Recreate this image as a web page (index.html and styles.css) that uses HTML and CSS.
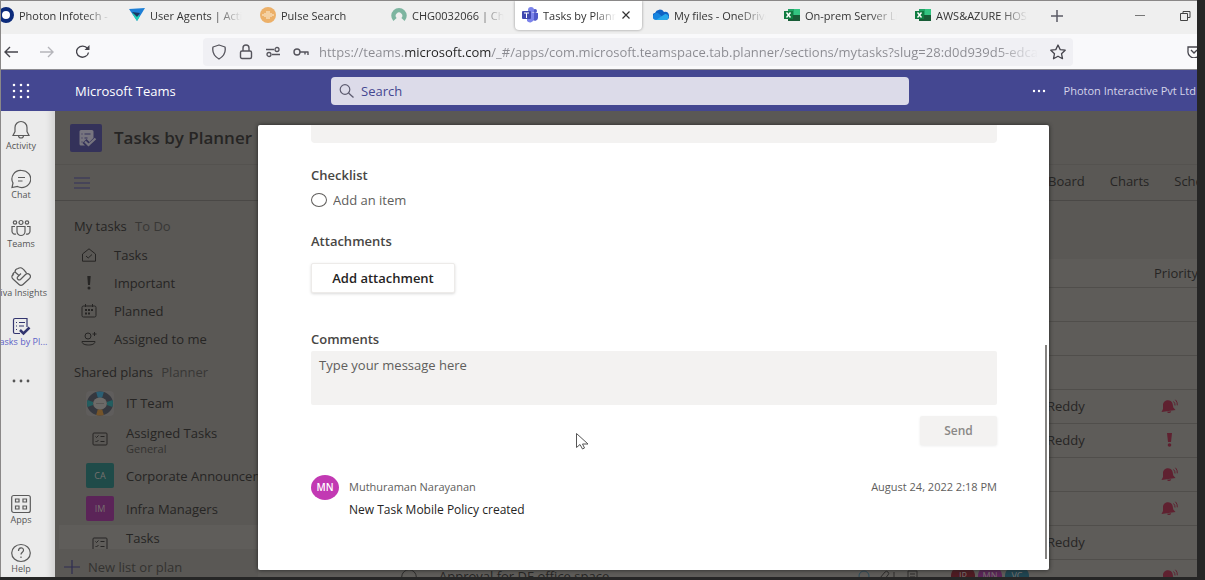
FILE: index.html
```html
<!DOCTYPE html>
<html lang="en">
<head>
    <meta charset="UTF-8">
    <meta name="viewport" content="width=device-width, initial-scale=1.0">
    <title>Tasks by Planner</title>
    <link rel="stylesheet" href="styles.css">
</head>
<body>
    <div class="window">
        <div class="tabs">
            <button class="tab first" type="button">
                <svg width="13" height="16" viewBox="3 0 13 16"><circle cx="8" cy="8" r="6" fill="#fff" stroke="#0b2a7a" stroke-width="4"/></svg>
                <span>Photon Infotech - Home</span>
            </button>
            <button class="tab" type="button">
                <svg width="16" height="16" viewBox="0 0 16 16"><path d="M0 2L16 1 8 14z" fill="#1d7fd6"/><path d="M3 6l5 8 3-5z" fill="#1fd0b4"/><path d="M3 5l8 1-3 4z" fill="#173a63"/></svg>
                <span>User Agents | Activity</span>
            </button>
            <button class="tab" type="button">
                <svg width="16" height="16" viewBox="0 0 16 16"><circle cx="8" cy="8" r="8" fill="#ecb069"/><path d="M3 7v2M5 6v4M7 4v8M9 4v8M11 6v4M13 7v2" stroke="#fdf0dc"/></svg>
                <span>Pulse Search</span>
            </button>
            <button class="tab" type="button">
                <svg width="16" height="16" viewBox="0 0 16 16"><path d="M4 12.500a5.500 5.500 0 1 1 8 0" fill="none" stroke="#7db5a0" stroke-width="4.500"/></svg>
                <span>CHG0032066 | Change</span>
            </button>
            <button class="tab active" type="button">
                <svg width="16" height="16" viewBox="0 0 16 16"><circle cx="13" cy="4" r="2" fill="#5059c9"/><circle cx="9" cy="3" r="3" fill="#7b83eb"/><path d="M11 6h5v5a3 3 0 0 1-5 2z" fill="#5059c9"/><path d="M5 6h7v6a4 4 0 0 1-7 2z" fill="#7b83eb"/><rect y="4" width="9" height="8" rx="1" fill="#4048b0"/><path d="M2 6h5M4.500 6v5" stroke="#fff"/></svg>
                <span>Tasks by Planner</span>
                <svg class="close" width="10" height="10" viewBox="0 0 10 10"><path d="M1.500 1.500l7 7M8.500 1.500l-7 7" stroke="#333" stroke-width="1.200"/></svg>
            </button>
            <button class="tab" type="button">
                <svg width="16" height="16" viewBox="0 0 16 16"><path d="M3 12a3 3 0 0 1-1-6 5 5 0 0 1 9-1 4 4 0 0 1 2 8z" fill="#0f62c4"/><path d="M0 10a4 4 0 0 1 5-4l8 7H3a3 3 0 0 1-3-3z" fill="#1684df"/><path d="M3 13l9-6a3 3 0 0 1 1 6z" fill="#28a8ea"/></svg>
                <span>My files - OneDrive</span>
            </button>
            <button class="tab" type="button">
                <svg width="16" height="16" viewBox="0 0 16 16"><path d="M4 2h12v12H4z" fill="#21a366"/><path d="M10 2h6v6h-6z" fill="#33c481"/><path d="M4 8h12v6H4z" fill="#185c37"/><rect y="4" width="9" height="8" fill="#107c41"/><path d="M2.500 5.500l4 5M6.500 5.500l-4 5" stroke="#fff" stroke-width="1.400"/></svg>
                <span>On-prem Server List</span>
            </button>
            <button class="tab" type="button">
                <svg width="16" height="16" viewBox="0 0 16 16"><path d="M4 2h12v12H4z" fill="#21a366"/><path d="M10 2h6v6h-6z" fill="#33c481"/><path d="M4 8h12v6H4z" fill="#185c37"/><rect y="4" width="9" height="8" fill="#107c41"/><path d="M2.500 5.500l4 5M6.500 5.500l-4 5" stroke="#fff" stroke-width="1.400"/></svg>
                <span>AWS&amp;AZURE HOSTS</span>
            </button>
            <button class="icon-btn" type="button" aria-label="New tab">
                <svg width="12" height="12" viewBox="0 0 12 12"><path d="M6 0v12M0 6h12" stroke="#5b5b66" stroke-width="1.500"/></svg>
            </button>
            <div class="window-controls">
                <button class="icon-btn" type="button" aria-label="Minimize">
                    <svg width="10" height="10" viewBox="0 0 10 10"><path d="M0 4.500h10" stroke="#777"/></svg>
                </button>
                <button class="icon-btn" type="button" aria-label="Restore">
                    <svg width="11" height="10" viewBox="0 0 11 10"><path d="M.500 2.500h7v7h-7zM3 2V.500h7v6H8" fill="none" stroke="#444"/></svg>
                </button>
            </div>
        </div>

        <div class="navbar">
            <button class="icon-btn" type="button" aria-label="Back">
                <svg width="14" height="12" viewBox="0 0 14 12"><path d="M14 6H1M6 1L1 6l5 5" fill="none" stroke="#45444c" stroke-width="1.400"/></svg>
            </button>
            <button class="icon-btn" type="button" aria-label="Forward">
                <svg width="14" height="12" viewBox="0 0 14 12"><path d="M0 6h13M8 1l5 5-5 5" fill="none" stroke="#b5b5ba" stroke-width="1.400"/></svg>
            </button>
            <button class="icon-btn" type="button" aria-label="Reload">
                <svg width="16" height="14" viewBox="0 0 16 14"><path d="M11.500 3.500a6 5.500 0 1 0 1 4" fill="none" stroke="#45444c" stroke-width="1.400"/><path d="M13.500 0v5H8.500z" fill="#45444c"/></svg>
            </button>
            <div class="urlbar">
                <svg width="16" height="16" viewBox="0 0 16 16"><path d="M8 1l6 2c1 5-1 9-6 12-5-3-7-7-6-12z" fill="none" stroke="#55545c" stroke-width="1.300" stroke-linejoin="round"/></svg>
                <svg width="14" height="16" viewBox="0 0 14 16"><rect x="1.500" y="7" width="11" height="7.500" rx="1.500" fill="none" stroke="#55545c" stroke-width="1.400"/><path d="M4 7V4a3 3 0 0 1 6 0v3" fill="none" stroke="#55545c" stroke-width="1.400"/></svg>
                <svg width="16" height="12" viewBox="0 0 16 12"><path d="M1 3.500h8M7 8.500h8" stroke="#55545c" stroke-width="1.400"/><circle cx="12" cy="3.500" r="2" fill="none" stroke="#55545c" stroke-width="1.300"/><circle cx="4" cy="8.500" r="2" fill="none" stroke="#55545c" stroke-width="1.300"/></svg>
                <svg width="16" height="12" viewBox="0 0 16 12"><circle cx="4" cy="6" r="3" fill="none" stroke="#55545c" stroke-width="1.400"/><path d="M7 6h8.500M12 6v2.500M15 6v3" stroke="#55545c" stroke-width="1.400"/></svg>
                <input class="url" type="text" aria-label="Address" value="https://teams.microsoft.com/_#/apps/com.microsoft.teamspace.tab.planner/sections/mytasks?slug=28:d0d939d5-edca-4">
                <svg width="16" height="16" viewBox="0 0 16 16"><path d="M8 1l2.200 4.600 5 .600-3.700 3.500 1 5L8 12.200l-4.500 2.500 1-5L.800 6.200l5-.600z" fill="none" stroke="#45444c" stroke-width="1.300" stroke-linejoin="round"/></svg>
            </div>
            <button class="icon-btn" type="button" aria-label="Save to Pocket">
                <svg width="10" height="12" viewBox="0 0 10 12"><path d="M12 1H1v4a6 6 0 0 0 9 6M4 4l3 3 3-3" fill="none" stroke="#45444c" stroke-width="1.300"/></svg>
            </button>
        </div>

        <header class="teams-header">
            <button class="icon-btn" type="button" aria-label="App launcher">
                <svg width="18" height="16" viewBox="0 0 18 16"><path d="M2 2h.010M9 2h.010M16 2h.010M2 8h.010M9 8h.010M16 8h.010M2 14h.010M9 14h.010M16 14h.010" stroke="#fff" stroke-width="2.600" stroke-linecap="round"/></svg>
            </button>
            <span class="brand">Microsoft Teams</span>
            <label class="search">
                <svg width="16" height="14" viewBox="0 0 16 14"><circle cx="6" cy="5.500" r="4.800" fill="none" stroke="#5d5c70" stroke-width="1.200"/><path d="M9.500 9l5 4.500" stroke="#5d5c70" stroke-width="1.300"/></svg>
                <input type="text" placeholder="Search" aria-label="Search">
            </label>
            <div class="account">
                <button class="icon-btn" type="button" aria-label="Settings and more">
                    <svg width="14" height="4" viewBox="0 0 14 4"><path d="M2 2h.010M7 2h.010M12 2h.010" stroke="#fff" stroke-width="2.400" stroke-linecap="round"/></svg>
                </button>
                <span>Photon Interactive Pvt Ltd</span>
            </div>
        </header>

        <div class="main">
            <nav class="rail">
                <a class="rail-item" href="#">
                    <svg width="20" height="20" viewBox="0 0 20 20"><path d="M10 1.500a6 6 0 0 0-6 6v4L2 15.500h16l-2-4v-4a6 6 0 0 0-6-6zM7.500 15.500a2.500 2.500 0 0 0 5 0"/></svg>
                    <span>Activity</span>
                </a>
                <a class="rail-item" href="#">
                    <svg width="20" height="20" viewBox="0 0 20 20"><path d="M10.500 1.500a9 8.500 0 1 1-4 16L1 18.500l1-4.500a8.700 8.500 0 0 1 8.500-12.500zM7 8.500h7M7 12h4.500"/></svg>
                    <span>Chat</span>
                </a>
                <a class="rail-item" href="#">
                    <svg width="20" height="20" viewBox="0 0 20 20"><circle cx="10" cy="4.500" r="2"/><circle cx="4" cy="4.500" r="1.700"/><circle cx="16" cy="4.500" r="1.700"/><path d="M6 8.500h8v5a4 4 0 0 1-8 0zM4 8.500H1v5a3 3 0 0 0 4 2.500M16 8.500h3v5a3 3 0 0 1-4 2.500"/></svg>
                    <span>Teams</span>
                </a>
                <a class="rail-item" href="#">
                    <svg width="20" height="20" viewBox="0 0 20 20"><path d="M10 6.500l-3.500 3.500a2 2 0 0 0 3 2.500l5-5a2.800 2.800 0 0 1 4 4l-6.500 6a3 3 0 0 1-4 0l-6-5.500a2.800 2.800 0 0 1 0-4.500l1-1M2 9a3 3 0 0 1 2-4 3.500 3.500 0 0 1 3-3.500 4 4 0 0 1 5.500 1l3 3.500M4 5l4 3.500"/></svg>
                    <span>Viva Insights</span>
                </a>
                <a class="rail-item selected" href="#">
                    <svg width="20" height="20" viewBox="0 0 20 20"><path d="M9 17.500H4A1.500 1.500 0 0 1 2.500 16V4A1.500 1.500 0 0 1 4 2.500h12V11M5 6.500h1M8 6.500h6M5 10h1M8 10h5M5 13.500h1"/><path d="M9 14l3.500 3.500 6-6" stroke-width="2.500"/></svg>
                    <span>Tasks by Pl...</span>
                </a>
                <button class="rail-more" type="button" aria-label="More apps">
                    <svg width="18" height="4" viewBox="0 0 18 4"><path d="M2 2h.010M9 2h.010M16 2h.010" stroke="#555" stroke-width="2.800" stroke-linecap="round"/></svg>
                </button>
                <a class="rail-item apps" href="#">
                    <svg width="20" height="20" viewBox="0 0 20 20"><rect x=".700" y="1.500" width="18.600" height="17" rx="2"/><path d="M4.500 5h3.500v3H4.500zM12 5h3.500v3H12zM4.500 12h3.500v3H4.500zM12 12h3.500v3H12z"/></svg>
                    <span>Apps</span>
                </a>
                <a class="rail-item" href="#">
                    <svg width="20" height="20" viewBox="0 0 20 20"><ellipse cx="10" cy="10" rx="9.300" ry="8.500"/><path d="M7.500 8c0-4 5-4 5-.800 0 2-2.500 2-2.500 4.300M10 13.500v1.500"/></svg>
                    <span>Help</span>
                </a>
            </nav>

            <div class="planner">
                <div class="planner-title">
                    <svg width="32" height="28" viewBox="0 0 32 28"><rect width="32" height="28" rx="2" fill="#34325a"/><path d="M11 6h11a1.500 1.500 0 0 1 1.500 1.500V14l-4 4-3-3-4 4 2.500 2.500h-4A1.500 1.500 0 0 1 9.500 20V7.500A1.500 1.500 0 0 1 11 6z" fill="#77757f"/><path d="M11.500 10h1M14.500 10h6M11.500 14h1M14.500 14h3M11.500 18h1" stroke="#34325a" stroke-width="1.200"/><path d="M15 17.500l3.500 3.500 7-6.500" fill="none" stroke="#77757f" stroke-width="2.200"/></svg>
                    <h1>Tasks by Planner</h1>
                </div>
                <div class="planner-bar">
                    <button class="icon-btn" type="button" aria-label="Toggle list">
                        <svg width="16" height="12" viewBox="0 0 16 12"><path d="M0 1h16M0 6h16M0 11h16" stroke="#33315c" stroke-width="1.200"/></svg>
                    </button>
                    <div class="views">
                        <a href="#">Board</a>
                        <a href="#">Charts</a>
                        <a href="#">Schedule</a>
                    </div>
                </div>
                <div class="planner-body">
                    <nav class="lists">
                        <h2>My tasks <small>To Do</small></h2>
                        <a class="list-item" href="#">
                            <svg width="16" height="14" viewBox="0 0 16 14"><path d="M1.500 6L8 .800 14.500 6v7.200h-13zM5 8l2.200 2L11 6.500"/></svg>
                            Tasks
                        </a>
                        <a class="list-item" href="#">
                            <svg width="16" height="14" viewBox="0 0 16 14"><path d="M6.300 0h3.400L9 9H7z" fill="#262524" stroke="none"/><circle cx="8" cy="12" r="1.500" fill="#262524" stroke="none"/></svg>
                            Important
                        </a>
                        <a class="list-item" href="#">
                            <svg width="16" height="14" viewBox="0 0 16 14"><rect x="1" y="2" width="14" height="11" rx="1.500"/><path d="M4.500 0v3M11.500 0v3"/><path d="M4 6h2M7 6h2M10 6h2M4 9.500h2M7 9.500h2" stroke-width="2"/></svg>
                            Planned
                        </a>
                        <a class="list-item" href="#">
                            <svg width="16" height="14" viewBox="0 0 16 14"><circle cx="7" cy="4" r="3"/><path d="M1 9.500h13c0 2.500-3 3.500-6.500 3.500S1 12 1 9.500zM13.500 0v4M11.500 2h4"/></svg>
                            Assigned to me
                        </a>
                        <h2>Shared plans <small>Planner</small></h2>
                        <a class="plan" href="#">
                            <svg width="28" height="25" viewBox="0 0 28 25"><rect width="28" height="25" rx="4" fill="#5f5d5c" stroke="none"/><ellipse cx="14" cy="12.500" rx="10" ry="9" stroke="#35383f" stroke-width="6"/><g stroke-width="6"><path d="M11 3.900a10 9 0 0 1 6 0" stroke="#2b5f74"/><path d="M4.300 10a10 9 0 0 0 0 5M23.700 10a10 9 0 0 1 0 5" stroke="#235e60"/><path d="M11 21.100a10 9 0 0 0 6 0" stroke="#74542a"/></g><ellipse cx="14" cy="12.500" rx="6.500" ry="6" fill="#6c6a68" stroke="none"/><path d="M10 12.500h8" stroke="#5a5856"/></svg>
                            IT Team
                        </a>
                        <a class="plan sub" href="#">
                            <svg width="16" height="14" viewBox="0 0 16 14"><rect x="1" y="1" width="14" height="12" rx="1"/><path d="M3.500 4.500l1 1 2-2M8.500 4.500h4M3.500 9l1 1 2-2M8.500 9.500h4"/></svg>
                            <span>Assigned Tasks<small>General</small></span>
                        </a>
                        <a class="plan" href="#"><i class="badge teal">CA</i>Corporate Announcements</a>
                        <a class="plan" href="#"><i class="badge magenta">IM</i>Infra Managers</a>
                        <a class="plan sub current" href="#">
                            <svg width="16" height="14" viewBox="0 0 16 14"><rect x="1" y="1" width="14" height="12" rx="1"/><path d="M3.500 4.500l1 1 2-2M8.500 4.500h4M3.500 9l1 1 2-2M8.500 9.500h4"/></svg>
                            <span>Tasks</span>
                        </a>
                        <button class="new-list" type="button">
                            <svg width="16" height="14" viewBox="0 0 16 14"><path d="M8 0v14M0 7h16" stroke="#2f2d52" stroke-width="1.200"/></svg>
                            New list or plan
                        </button>
                    </nav>

                    <div class="grid">
                        <table>
                            <thead>
                                <tr><th></th><th class="col-meta"></th><th class="col-people"></th><th class="col-priority">Priority</th></tr>
                            </thead>
                            <tbody>
                                <tr><td></td><td></td><td></td><td></td></tr>
                                <tr><td></td><td></td><td></td><td></td></tr>
                                <tr><td></td><td></td><td></td><td></td></tr>
                                <tr><td></td><td></td><td class="person">Reddy</td><td class="prio"><svg width="18" height="14" viewBox="0 0 18 14"><use href="#urgent"/></svg></td></tr>
                                <tr><td></td><td></td><td class="person">Reddy</td><td class="prio"><svg width="18" height="14" viewBox="0 0 18 14"><path d="M6 0h5l-1 9H7z" fill="#5f2130"/><circle cx="8.500" cy="12" r="1.800" fill="#5f2130"/></svg></td></tr>
                                <tr><td></td><td></td><td></td><td class="prio"><svg width="18" height="14" viewBox="0 0 18 14"><use href="#urgent"/></svg></td></tr>
                                <tr><td></td><td></td><td></td><td class="prio"><svg width="18" height="14" viewBox="0 0 18 14"><use href="#urgent"/></svg></td></tr>
                                <tr><td></td><td></td><td class="person">Reddy</td><td></td></tr>
                                <tr>
                                    <td class="task"><svg width="16" height="16" viewBox="0 0 16 16"><circle cx="8" cy="8" r="7.300" fill="none" stroke="#2c2b2a"/></svg>Approval for DE office space</td>
                                    <td class="meta">
                                        <svg width="62" height="12" viewBox="0 0 62 12"><circle cx="6" cy="6" r="5" fill="none" stroke="#2a4a58"/><path d="M22 8l5-6a2 2 0 0 1 3 3l-4 5M36 2v9" fill="none" stroke="#2c2b2a"/><path d="M50 1h9v10h-9zM52 4h5M52 7h5" fill="none" stroke="#2c2b2a"/></svg>
                                    </td>
                                    <td class="people"><i class="face red">JP</i><i class="face magenta">MN</i><i class="face blue">VC</i></td>
                                    <td class="prio"><svg width="18" height="14" viewBox="0 0 18 14"><use href="#urgent"/></svg></td>
                                </tr>
                            </tbody>
                        </table>
                        <svg class="defs" width="0" height="0"><defs><g id="urgent"><path d="M2 6c0-5.500 8-6.500 9.500-1.500l.800 4L14.500 11 .500 13l1.500-3z" fill="#5f2130"/><path d="M6 12.800l4-.600a2 1.500 0 0 1-4 .600z" fill="#5f2130"/><path d="M12.500 2.500a5 5 0 0 1 1.500 4M14.500 .800a7 7 0 0 1 1.800 5.500" fill="none" stroke="#5f2130"/></g></defs></svg>
                    </div>
                </div>

                <div class="overlay">
                    <form class="dialog">
                        <div class="notes"></div>
                        <h3>Checklist</h3>
                        <div class="check-row">
                            <input class="check" type="checkbox" aria-label="Item done">
                            <input class="check-text" type="text" placeholder="Add an item" aria-label="Add an item">
                        </div>
                        <h3>Attachments</h3>
                        <button class="attach" type="button">Add attachment</button>
                        <label class="field-label" for="comment">Comments</label>
                        <textarea id="comment" placeholder="Type your message here"></textarea>
                        <button class="send" type="button" disabled>Send</button>
                        <div class="comment">
                            <i class="avatar">MN</i>
                            <div class="comment-body">
                                <div class="comment-head"><span>Muthuraman Narayanan</span><time>August 24, 2022 2:18 PM</time></div>
                                <p>New Task Mobile Policy created</p>
                            </div>
                        </div>
                        <div class="scrollbar"></div>
                    </form>
                </div>
            </div>
        </div>
        <svg class="cursor" width="13" height="17" viewBox="0 0 13 17"><path d="M.500.500v14l3.500-3 2.500 4.500 2-1-2-4h5.500z" fill="#fff" stroke="#555"/></svg>
    </div>
</body>
</html>
```

FILE: styles.css
```css
* {
    box-sizing: border-box;
}
body {
    margin: 0;
    height: 100vh;
    padding: 0 8px 3px 0;
    background-color: #262626;
    font-family: "Open Sans", "Noto Sans", sans-serif;
    font-size: 13px;
    overflow: hidden;
}
svg {
    flex: none;
    display: block;
}
button, input, textarea {
    font-family: inherit;
    font-size: 13px;
}
a {
    color: inherit;
    text-decoration: none;
}
i {
    font-style: normal;
}
.window {
    position: relative;
    display: flex;
    flex-direction: column;
    height: 100%;
    border-top: 1px solid #8a8888;
    border-left: 1px solid #8a8888;
    overflow: hidden;
    background-color: #5a5855;
}
.icon-btn {
    display: flex;
    align-items: center;
    padding: 0;
    border: none;
    background: none;
}

/* browser tabs */
.tabs {
    display: flex;
    gap: 4px;
    height: 33px;
    padding-bottom: 4px;
    background-color: #efefef;
}
.tab {
    display: flex;
    align-items: center;
    gap: 5px;
    flex: 0 1 127px;
    min-width: 0;
    padding: 0 7px 1px 7px;
    border: none;
    border-radius: 0 0 4px 4px;
    background: none;
    color: #333;
    font-size: 11px;
}
.tab span {
    flex: 1;
    min-width: 0;
    text-align: left;
    white-space: nowrap;
    overflow: hidden;
    mask-image: linear-gradient(to right, #000 70%, transparent);
}
.tab .close {
    margin-right: 4px;
}
.tab.first {
    flex-basis: 117px;
    padding-left: 0;
}
.tab.active {
    background-color: #fff;
    box-shadow: 0 0 3px rgba(0, 0, 0, 0.4);
}
.tabs > .icon-btn {
    margin-left: 12px;
}
.window-controls {
    display: flex;
    gap: 35px;
    margin-left: auto;
    padding-right: 6px;
}

/* address bar */
.navbar {
    display: flex;
    align-items: center;
    gap: 22px;
    height: 36px;
    padding-left: 3px;
    background-color: #f9f9fb;
    border-bottom: 1px solid #8d8c92;
}
.urlbar {
    display: flex;
    align-items: center;
    gap: 12px;
    flex: 1;
    height: 28px;
    margin: 0 92px 0 89px;
    padding: 0 7px 0 8px;
    border-radius: 4px;
    background-color: #f0f0f4;
}
.url {
    flex: 1;
    min-width: 0;
    height: 24px;
    margin-left: -2px;
    padding: 0;
    border: none;
    outline: none;
    color: #333;
    /* the host name is darker, the tail fades out */
    background: linear-gradient(to right, #8a8a90 85px, #222 85px, #222 172px, #8a8a90 172px, #8a8a90 94%, transparent);
    background-clip: text;
    -webkit-background-clip: text;
    -webkit-text-fill-color: transparent;
}

/* teams header */
.teams-header {
    display: flex;
    align-items: center;
    height: 41px;
    padding-left: 11px;
    background-color: #444791;
    color: #fff;
}
.brand {
    flex: 0 0 256px;
    margin-left: 45px;
}
.search {
    display: flex;
    align-items: center;
    gap: 6px;
    flex: 1;
    height: 28px;
    padding: 0 8px;
    border-radius: 4px;
    background-color: #dcdbe9;
}
.search input {
    flex: 1;
    min-width: 0;
    padding: 0;
    border: none;
    outline: none;
    background: none;
}
.search input::placeholder {
    color: #444791;
}
.account {
    display: flex;
    align-items: center;
    justify-content: flex-end;
    gap: 18px;
    flex: 0 0 288px;
    padding-right: 1px;
    color: #d5d5ea;
    font-size: 11px;
    white-space: nowrap;
}

.main {
    display: flex;
    flex: 1;
    min-height: 0;
}

/* app rail */
.rail {
    display: flex;
    flex-direction: column;
    flex: 0 0 54px;
    padding-top: 9px;
    overflow: hidden;
    background-color: #ebebeb;
    box-shadow: inset -8px 0 6px -4px #d2d2d2;
}
.rail-item {
    display: flex;
    flex-direction: column;
    align-items: center;
    flex: none;
    width: 68px;
    height: 49px;
    margin-left: -14px;
    color: #555;
    font-size: 9px;
    line-height: 12px;
}
.rail-item svg {
    fill: none;
    stroke: #5a5a5a;
    stroke-width: 1.2;
}
.rail-item.selected {
    color: #5b5fc7;
}
.rail-item.selected svg {
    stroke: #33356f;
}
.rail-more {
    display: flex;
    width: 40px;
    padding: 14px 0 0 11px;
    border: none;
    background: none;
}
.rail-item.apps {
    margin-top: auto;
}
.rail-item:last-child {
    height: 34px;
}

/* planner */
.planner {
    position: relative;
    display: flex;
    flex-direction: column;
    flex: 1;
    min-width: 0;
    color: #262524;
}
.planner-title {
    display: flex;
    align-items: center;
    gap: 12px;
    height: 54px;
    padding-left: 15px;
    border-bottom: 1px solid #54524f;
}
.planner-title h1 {
    margin: 0;
    font-size: 17px;
    font-weight: 600;
}
.planner-bar {
    display: flex;
    align-items: center;
    justify-content: space-between;
    height: 36px;
    padding-left: 19px;
    border-bottom: 1px solid #4a4846;
}
.views {
    display: flex;
    gap: 25px;
    flex: 0 0 149px;
    padding-bottom: 3px;
    overflow: hidden;
}
.planner-body {
    display: flex;
    flex: 1;
    min-height: 0;
}
.lists {
    display: flex;
    flex-direction: column;
    flex: 0 0 203px;
    padding-top: 11px;
    overflow: hidden;
    white-space: nowrap;
}
.lists svg {
    fill: none;
    stroke: #262524;
}
.lists h2 {
    flex: none;
    margin: 0;
    padding-left: 19px;
    font-size: 13px;
    font-weight: 400;
    line-height: 29px;
}
.lists h2 small {
    margin-left: 5px;
    font-size: 13px;
    color: #383735;
}
.list-item {
    display: flex;
    align-items: center;
    flex: none;
    gap: 17px;
    height: 28px;
    padding-left: 26px;
}
.lists h2 + .plan {
    height: 32px;
}
.list-item + h2 {
    margin-top: 5px;
}
.plan {
    display: flex;
    align-items: center;
    flex: none;
    gap: 12px;
    height: 33px;
    padding-left: 31px;
}
.plan.sub {
    gap: 18px;
    height: 40px;
    padding-left: 37px;
    line-height: 18px;
}
.plan.sub small {
    display: block;
    font-size: 11px;
    line-height: 13px;
    color: #333230;
}
.plan.sub.current {
    align-items: flex-start;
    flex: 0 1 24px;
    min-height: 0;
    margin-left: 4px;
    padding: 4px 0 0 33px;
    overflow: hidden;
    background-color: #5f5d5a;
}
.plan.sub.current svg {
    margin-top: 8px;
}
.badge {
    flex: none;
    width: 28px;
    height: 25px;
    border-radius: 2px;
    color: #77716f;
    font-size: 9px;
    line-height: 25px;
    text-align: center;
}
.teal {
    background-color: #1f4b49;
}
.magenta {
    background-color: #5b2458;
}
.red {
    background-color: #4e1b22;
}
.blue {
    background-color: #1f4450;
}
.new-list {
    display: flex;
    align-items: center;
    flex: none;
    gap: 8px;
    height: 28px;
    padding: 8px 0 0 9px;
    border: none;
    background: none;
    color: #333230;
}

/* task grid */
.grid {
    flex: 1;
    min-width: 0;
    padding-top: 58px;
    overflow: hidden;
}
.grid table {
    width: 100%;
    table-layout: fixed;
    border-collapse: collapse;
    background-color: #5e5c59;
}
.grid th, .grid td {
    height: 34px;
    padding: 0;
    border-bottom: 1px solid #504e4b;
    font-weight: 400;
    text-align: left;
    white-space: nowrap;
}
.grid th {
    height: 28px;
}
.col-meta {
    width: 88px;
}
.col-people {
    width: 208px;
}
.col-priority {
    width: 43px;
}
.grid .person {
    padding-left: 101px;
}
.prio svg {
    margin-left: 7px;
}
.task svg {
    display: inline-block;
    margin: 0 22px 0 143px;
    vertical-align: middle;
}
.face {
    display: inline-block;
    width: 24px;
    height: 22px;
    margin-right: 3px;
    border-radius: 50%;
    color: #77716f;
    font-size: 9px;
    line-height: 22px;
    text-align: center;
}
.people {
    text-indent: 5px;
}
.people .face {
    text-indent: 0;
}
.defs {
    display: none;
}

/* task dialog */
.overlay {
    position: absolute;
    inset: 0;
    display: flex;
    padding: 14px 148px 7px 203px;
}
.dialog {
    position: relative;
    display: flex;
    flex-direction: column;
    align-items: flex-start;
    flex: 1;
    min-width: 0;
    padding: 0 52px 0 53px;
    border-radius: 2px;
    background-color: #fff;
    box-shadow: 0 0 4px #222;
    color: #252423;
}
.notes {
    align-self: stretch;
    height: 18px;
    margin-bottom: 23px;
    border-radius: 0 0 4px 4px;
    background-color: #f3f2f1;
}
.dialog h3, .field-label {
    margin: 0;
    color: #484644;
    font-size: 13px;
    font-weight: 600;
    line-height: 18px;
}
.check-row {
    display: flex;
    align-items: center;
    gap: 6px;
    height: 24px;
    margin: 4px 0 20px;
}
.check {
    appearance: none;
    width: 16px;
    height: 14px;
    margin: 0;
    border: 1px solid #605e5c;
    border-radius: 50%;
}
.check-text {
    padding: 0;
    border: none;
    outline: none;
}
.check-text::placeholder, .dialog textarea::placeholder {
    color: #605e5c;
}
.attach {
    width: 144px;
    height: 30px;
    margin: 13px 0 37px;
    padding: 0;
    border: 1px solid #edebe9;
    border-radius: 2px;
    background-color: #fff;
    box-shadow: 0 1px 3px rgba(0, 0, 0, 0.15);
    color: #252423;
    font-weight: 600;
}
.dialog textarea {
    display: block;
    align-self: stretch;
    height: 54px;
    margin-top: 3px;
    padding: 5px 8px;
    border: none;
    border-radius: 2px;
    background-color: #f3f2f1;
    resize: none;
}
.send {
    align-self: flex-end;
    width: 77px;
    height: 29px;
    margin-top: 11px;
    padding: 0;
    border: none;
    border-radius: 2px;
    background-color: #f3f2f1;
    box-shadow: 0 1px 3px rgba(0, 0, 0, 0.08);
    color: #8a8886;
    font-size: 12px;
    font-weight: 600;
}
.comment {
    display: flex;
    align-self: stretch;
    gap: 10px;
    margin-top: 30px;
}
.avatar {
    width: 28px;
    height: 25px;
    border-radius: 50%;
    background-color: #c239b3;
    color: #fff;
    font-size: 10px;
    font-weight: 600;
    line-height: 25px;
    text-align: center;
}
.comment-body {
    flex: 1;
}
.comment-head {
    display: flex;
    justify-content: space-between;
    color: #605e5c;
    font-size: 11px;
    line-height: 24px;
}
.comment p {
    margin: 0;
    font-size: 12px;
    line-height: 22px;
}
.scrollbar {
    position: absolute;
    top: 220px;
    right: 2px;
    bottom: 11px;
    width: 2px;
    background-color: #858381;
}
.cursor {
    position: absolute;
    top: 432px;
    left: 575px;
}
```
